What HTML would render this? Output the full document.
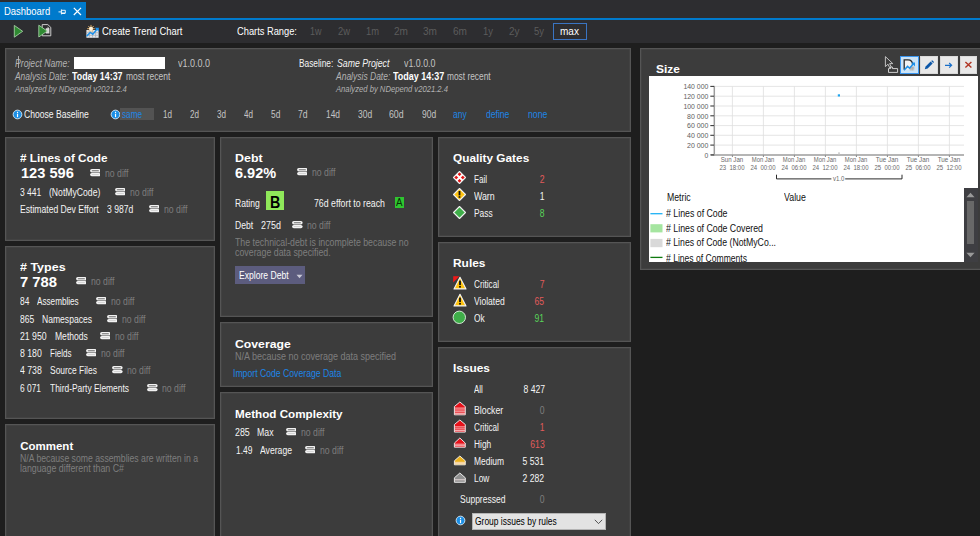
<!DOCTYPE html>
<html><head><meta charset="utf-8"><title>Dashboard</title>
<style>
*{box-sizing:border-box;margin:0;padding:0}
html,body{width:980px;height:536px;overflow:hidden;background:#1e1e1e;font-family:"Liberation Sans",sans-serif;font-size:10px;color:#f1f1f1}
body{position:relative}
.a{position:absolute;white-space:nowrap;display:block}
.p{position:absolute;background:#3c3c3c;border:1px solid #555;box-shadow:inset 0 0 0 0.5px rgba(85,85,85,.5)}
</style></head><body>
<div class="a" style="left:0px;top:0px;width:980px;height:20px;background:#2d2d30;"></div>
<div class="a" style="left:0px;top:2.4px;width:85.5px;height:16.6px;background:#007acc;"></div>
<div class="a" style="left:0px;top:18px;width:980px;height:2px;background:#007acc;"></div>
<div class="a" style="top:1px;line-height:20px;font-size:10.6px;color:#fff;left:3.80px;transform-origin:0 0;transform:scaleX(0.8909);">Dashboard</div>
<svg class="a" style="left:58px;top:7px" width="9" height="9" viewBox="0 0 9 9"><path d="M0.5 4.9H3.4M3.4 2.4V7.4M3.4 3.3H7.3V6H3.4M3.4 6.5H7.3" fill="none" stroke="#fff" stroke-width="0.9"/></svg>
<svg class="a" style="left:73px;top:7.3px" width="9" height="9" viewBox="0 0 9 9"><path d="M0.8 0.8L8 8M8 0.8L0.8 8" fill="none" stroke="#fff" stroke-width="1.2"/></svg>
<div class="a" style="left:0px;top:20px;width:980px;height:23px;background:#2d2d30;"></div>
<svg class="a" style="left:13px;top:24px" width="12" height="15" viewBox="0 0 12 15"><path d="M1.3 1.4L9.7 7.3L1.3 13.2Z" fill="#2f8a32" stroke="#a4cda4" stroke-width="0.9"/></svg>
<svg class="a" style="left:37px;top:23px" width="16" height="16" viewBox="37 23 16 16"><path d="M42.2 24.6H47.8L50.8 27.4V35.8H42.2Z" fill="#2d2d30" stroke="#dcdcdc" stroke-width="0.9"/><path d="M45.8 28.2H47.6V26.6L49.4 28.6V33.4H45.8Z" fill="#d8d8d8"/><path d="M38.8 25.2L47.2 31.1L38.8 37Z" fill="#2f8a32" stroke="#a4cda4" stroke-width="0.9"/></svg>
<svg class="a" style="left:85px;top:23.5px" width="15" height="15" viewBox="85 23.5 15 15"><rect x="86.4" y="29.5" width="12.2" height="7.8" fill="#e3e6ea"/><path d="M86.4 32.2H98.6M86.4 34.8H98.6M89.4 29.5V37.3M92.5 29.5V37.3M95.6 29.5V37.3" stroke="#a2a9b2" stroke-width="0.7"/><path d="M91 24.4V32M87.2 28.2H94.8M88.3 25.5L93.7 30.9M93.7 25.5L88.3 30.9" stroke="#f2b968" stroke-width="0.9"/><circle cx="91" cy="28.2" r="2" fill="#fff3dc"/><path d="M86.6 35.6L90.4 32L92.8 33.8L97.2 28.6" fill="none" stroke="#1e90e8" stroke-width="1.5"/><path d="M94.8 27.2H98.8V31.2Z" fill="#1e90e8"/></svg>
<div class="a" style="top:22px;line-height:20px;font-size:10.4px;color:#fff;left:102.00px;transform-origin:0 0;transform:scaleX(0.9043);">Create Trend Chart</div>
<div class="a" style="top:22px;line-height:20px;font-size:10.4px;color:#fff;left:237.00px;transform-origin:0 0;transform:scaleX(0.8947);">Charts Range:</div>
<div class="a" style="top:22px;line-height:20px;font-size:10.4px;color:#5c5c5c;left:309.50px;transform-origin:0 0;transform:scaleX(0.8650);">1w</div>
<div class="a" style="top:22px;line-height:20px;font-size:10.4px;color:#5c5c5c;left:337.50px;transform-origin:0 0;transform:scaleX(0.9026);">2w</div>
<div class="a" style="top:22px;line-height:20px;font-size:10.4px;color:#5c5c5c;left:365.50px;transform-origin:0 0;transform:scaleX(0.8998);">1m</div>
<div class="a" style="top:22px;line-height:20px;font-size:10.4px;color:#5c5c5c;left:394.00px;transform-origin:0 0;transform:scaleX(0.9690);">2m</div>
<div class="a" style="top:22px;line-height:20px;font-size:10.4px;color:#5c5c5c;left:423.00px;transform-origin:0 0;transform:scaleX(0.9690);">3m</div>
<div class="a" style="top:22px;line-height:20px;font-size:10.4px;color:#5c5c5c;left:453.00px;transform-origin:0 0;transform:scaleX(0.9690);">6m</div>
<div class="a" style="top:22px;line-height:20px;font-size:10.4px;color:#5c5c5c;left:483.00px;transform-origin:0 0;transform:scaleX(0.9104);">1y</div>
<div class="a" style="top:22px;line-height:20px;font-size:10.4px;color:#5c5c5c;left:508.50px;transform-origin:0 0;transform:scaleX(0.9559);">2y</div>
<div class="a" style="top:22px;line-height:20px;font-size:10.4px;color:#5c5c5c;left:534.00px;transform-origin:0 0;transform:scaleX(0.9104);">5y</div>
<div class="a" style="left:553px;top:23.2px;width:34px;height:16.4px;background:#2d2d30;border:1.2px solid #3a74c2"></div>
<div class="a" style="top:22px;line-height:20px;font-size:10.4px;color:#fff;left:560.00px;transform-origin:0 0;transform:scaleX(0.9670);">max</div>
<div class="p" style="left:5px;top:48px;width:626px;height:84px"></div>
<div class="p" style="left:5px;top:137px;width:210px;height:104px"></div>
<div class="p" style="left:5px;top:246px;width:210px;height:173px"></div>
<div class="p" style="left:5px;top:424px;width:210px;height:121px"></div>
<div class="p" style="left:220px;top:137px;width:213px;height:180px"></div>
<div class="p" style="left:220px;top:322px;width:213px;height:65px"></div>
<div class="p" style="left:220px;top:392px;width:213px;height:153px"></div>
<div class="p" style="left:438px;top:137px;width:193px;height:100px"></div>
<div class="p" style="left:438px;top:242px;width:193px;height:100px"></div>
<div class="p" style="left:438px;top:347px;width:193px;height:198px"></div>
<div class="p" style="left:640px;top:48px;width:350px;height:222px"></div>
<div class="a" style="top:53px;line-height:20px;font-size:11px;color:#b2b2b2;font-style:italic;left:14.70px;transform-origin:0 0;transform:scaleX(0.7849);">Project Name:</div>
<div class="a" style="left:73.5px;top:57px;width:91px;height:12px;background:#fff;"></div>
<div class="a" style="left:18px;top:55.5px;width:1px;height:12.5px;background:#bdbdbd;opacity:.8"></div>
<div class="a" style="top:53px;line-height:20px;font-size:11px;color:#c4c4c4;left:177.50px;transform-origin:0 0;transform:scaleX(0.8176);">v1.0.0.0</div>
<div class="a" style="top:66px;line-height:20px;font-size:11px;color:#b2b2b2;font-style:italic;left:14.70px;transform-origin:0 0;transform:scaleX(0.7666);">Analysis Date:</div>
<div class="a" style="top:66px;line-height:20px;font-size:11px;color:#fff;font-weight:bold;left:72.30px;transform-origin:0 0;transform:scaleX(0.8045);">Today 14:37</div>
<div class="a" style="top:66px;line-height:20px;font-size:11px;color:#c4c4c4;left:125.70px;transform-origin:0 0;transform:scaleX(0.7709);">most recent</div>
<div class="a" style="top:79px;line-height:20px;font-size:9.5px;color:#b2b2b2;font-style:italic;left:14.70px;transform-origin:0 0;transform:scaleX(0.8049);">Analyzed by NDepend v2021.2.4</div>
<div class="a" style="top:53px;line-height:20px;font-size:11px;color:#f4f4f4;left:298.60px;transform-origin:0 0;transform:scaleX(0.7580);">Baseline:</div>
<div class="a" style="top:53px;line-height:20px;font-size:11px;color:#f4f4f4;font-style:italic;left:336.90px;transform-origin:0 0;transform:scaleX(0.7936);">Same Project</div>
<div class="a" style="top:53px;line-height:20px;font-size:11px;color:#c4c4c4;left:404.20px;transform-origin:0 0;transform:scaleX(0.8023);">v1.0.0.0</div>
<div class="a" style="top:66px;line-height:20px;font-size:11px;color:#b2b2b2;font-style:italic;left:335.70px;transform-origin:0 0;transform:scaleX(0.7723);">Analysis Date:</div>
<div class="a" style="top:66px;line-height:20px;font-size:11px;color:#fff;font-weight:bold;left:393.30px;transform-origin:0 0;transform:scaleX(0.8157);">Today 14:37</div>
<div class="a" style="top:66px;line-height:20px;font-size:11px;color:#c4c4c4;left:447.30px;transform-origin:0 0;transform:scaleX(0.7587);">most recent</div>
<div class="a" style="top:79px;line-height:20px;font-size:9.5px;color:#b2b2b2;font-style:italic;left:335.70px;transform-origin:0 0;transform:scaleX(0.8063);">Analyzed by NDepend v2021.2.4</div>
<svg class="a" style="left:12.2px;top:108.5px" width="11" height="11" viewBox="0 0 11 11"><circle cx="5.5" cy="5.5" r="4.35" fill="#1b8fe6" stroke="#d8ecfb" stroke-width="0.9"/><rect x="4.95" y="4.7" width="1.15" height="3.4" fill="#fff"/><rect x="4.95" y="2.8" width="1.15" height="1.2" fill="#fff"/></svg>
<div class="a" style="top:105px;line-height:20px;font-size:10px;color:#f4f4f4;left:24.20px;transform-origin:0 0;transform:scaleX(0.8571);">Choose Baseline</div>
<svg class="a" style="left:110.2px;top:108.5px" width="11" height="11" viewBox="0 0 11 11"><circle cx="5.5" cy="5.5" r="4.35" fill="#1b8fe6" stroke="#d8ecfb" stroke-width="0.9"/><rect x="4.95" y="4.7" width="1.15" height="3.4" fill="#fff"/><rect x="4.95" y="2.8" width="1.15" height="1.2" fill="#fff"/></svg>
<div class="a" style="left:120.3px;top:108.4px;width:33.5px;height:11.4px;background:#535353;"></div>
<div class="a" style="top:105px;line-height:20px;font-size:10px;color:#1d86e6;left:122.00px;transform-origin:0 0;transform:scaleX(0.8179);">same</div>
<div class="a" style="top:105px;line-height:20px;font-size:10px;color:#c4c4c4;left:163.20px;transform-origin:0 0;transform:scaleX(0.8091);">1d</div>
<div class="a" style="top:105px;line-height:20px;font-size:10px;color:#c4c4c4;left:190.00px;transform-origin:0 0;transform:scaleX(0.8091);">2d</div>
<div class="a" style="top:105px;line-height:20px;font-size:10px;color:#c4c4c4;left:217.00px;transform-origin:0 0;transform:scaleX(0.8091);">3d</div>
<div class="a" style="top:105px;line-height:20px;font-size:10px;color:#c4c4c4;left:244.00px;transform-origin:0 0;transform:scaleX(0.8091);">4d</div>
<div class="a" style="top:105px;line-height:20px;font-size:10px;color:#c4c4c4;left:271.00px;transform-origin:0 0;transform:scaleX(0.8361);">5d</div>
<div class="a" style="top:105px;line-height:20px;font-size:10px;color:#c4c4c4;left:298.40px;transform-origin:0 0;transform:scaleX(0.8630);">7d</div>
<div class="a" style="top:105px;line-height:20px;font-size:10px;color:#c4c4c4;left:325.60px;transform-origin:0 0;transform:scaleX(0.8391);">14d</div>
<div class="a" style="top:105px;line-height:20px;font-size:10px;color:#c4c4c4;left:357.90px;transform-origin:0 0;transform:scaleX(0.8451);">30d</div>
<div class="a" style="top:105px;line-height:20px;font-size:10px;color:#c4c4c4;left:389.30px;transform-origin:0 0;transform:scaleX(0.8750);">60d</div>
<div class="a" style="top:105px;line-height:20px;font-size:10px;color:#c4c4c4;left:421.50px;transform-origin:0 0;transform:scaleX(0.8451);">90d</div>
<div class="a" style="top:105px;line-height:20px;font-size:10px;color:#1d86e6;left:453.40px;transform-origin:0 0;transform:scaleX(0.8435);">any</div>
<div class="a" style="top:105px;line-height:20px;font-size:10px;color:#1d86e6;left:485.60px;transform-origin:0 0;transform:scaleX(0.8588);">define</div>
<div class="a" style="top:105px;line-height:20px;font-size:10px;color:#1d86e6;left:528.40px;transform-origin:0 0;transform:scaleX(0.8675);">none</div>
<div class="a" style="top:148px;line-height:20px;font-size:11.5px;color:#fff;font-weight:bold;left:20.00px;transform-origin:0 0;transform:scaleX(1.0219);"># Lines of Code</div>
<div class="a" style="top:163px;line-height:20px;font-size:14.3px;color:#fff;font-weight:bold;left:20.70px;transform-origin:0 0;transform:scaleX(1.0214);">123 596</div>
<svg class="a" style="left:89.8px;top:169.4px" width="10.7" height="7.3" viewBox="0 0 11 7.4" preserveAspectRatio="none"><rect x="0.1" y="0.1" width="10.8" height="3.35" rx="1.67" fill="#f2f2f2"/><rect x="1.8" y="1.15" width="7.4" height="1.2" rx="0.6" fill="#6e6e6e"/><rect x="0.1" y="3.95" width="10.8" height="3.35" rx="1.67" fill="#f2f2f2"/><rect x="1.8" y="5.05" width="7.4" height="1.1" rx="0.55" fill="#d6d6d6"/></svg>
<div class="a" style="top:164px;line-height:20px;font-size:10px;color:#7c7c7c;left:104.80px;transform-origin:0 0;transform:scaleX(0.8684);">no diff</div>
<div class="a" style="top:183px;line-height:20px;font-size:10px;color:#f4f4f4;left:20.00px;transform-origin:0 0;transform:scaleX(0.8511);">3 441</div>
<div class="a" style="top:183px;line-height:20px;font-size:10px;color:#f4f4f4;left:49.00px;transform-origin:0 0;transform:scaleX(0.8628);">(NotMyCode)</div>
<svg class="a" style="left:114.6px;top:188.4px" width="10.7" height="7.3" viewBox="0 0 11 7.4" preserveAspectRatio="none"><rect x="0.1" y="0.1" width="10.8" height="3.35" rx="1.67" fill="#f2f2f2"/><rect x="1.8" y="1.15" width="7.4" height="1.2" rx="0.6" fill="#6e6e6e"/><rect x="0.1" y="3.95" width="10.8" height="3.35" rx="1.67" fill="#f2f2f2"/><rect x="1.8" y="5.05" width="7.4" height="1.1" rx="0.55" fill="#d6d6d6"/></svg>
<div class="a" style="top:183px;line-height:20px;font-size:10px;color:#7c7c7c;left:129.60px;transform-origin:0 0;transform:scaleX(0.8684);">no diff</div>
<div class="a" style="top:200px;line-height:20px;font-size:10px;color:#f4f4f4;left:20.00px;transform-origin:0 0;transform:scaleX(0.8599);">Estimated Dev Effort</div>
<div class="a" style="top:200px;line-height:20px;font-size:10px;color:#f4f4f4;left:106.80px;transform-origin:0 0;transform:scaleX(0.8566);">3 987d</div>
<svg class="a" style="left:148.6px;top:205.4px" width="10.7" height="7.3" viewBox="0 0 11 7.4" preserveAspectRatio="none"><rect x="0.1" y="0.1" width="10.8" height="3.35" rx="1.67" fill="#f2f2f2"/><rect x="1.8" y="1.15" width="7.4" height="1.2" rx="0.6" fill="#6e6e6e"/><rect x="0.1" y="3.95" width="10.8" height="3.35" rx="1.67" fill="#f2f2f2"/><rect x="1.8" y="5.05" width="7.4" height="1.1" rx="0.55" fill="#d6d6d6"/></svg>
<div class="a" style="top:200px;line-height:20px;font-size:10px;color:#7c7c7c;left:163.60px;transform-origin:0 0;transform:scaleX(0.8684);">no diff</div>
<div class="a" style="top:257px;line-height:20px;font-size:11.5px;color:#fff;font-weight:bold;left:20.00px;transform-origin:0 0;transform:scaleX(1.0864);"># Types</div>
<div class="a" style="top:272px;line-height:20px;font-size:14.3px;color:#fff;font-weight:bold;left:20.00px;transform-origin:0 0;transform:scaleX(1.0339);">7 788</div>
<svg class="a" style="left:75.7px;top:277.4px" width="10.7" height="7.3" viewBox="0 0 11 7.4" preserveAspectRatio="none"><rect x="0.1" y="0.1" width="10.8" height="3.35" rx="1.67" fill="#f2f2f2"/><rect x="1.8" y="1.15" width="7.4" height="1.2" rx="0.6" fill="#6e6e6e"/><rect x="0.1" y="3.95" width="10.8" height="3.35" rx="1.67" fill="#f2f2f2"/><rect x="1.8" y="5.05" width="7.4" height="1.1" rx="0.55" fill="#d6d6d6"/></svg>
<div class="a" style="top:272px;line-height:20px;font-size:10px;color:#7c7c7c;left:90.70px;transform-origin:0 0;transform:scaleX(0.8684);">no diff</div>
<div class="a" style="top:292px;line-height:20px;font-size:10px;color:#f4f4f4;left:20.00px;transform-origin:0 0;transform:scaleX(0.8361);">84</div>
<div class="a" style="top:292px;line-height:20px;font-size:10px;color:#f4f4f4;left:37.30px;transform-origin:0 0;transform:scaleX(0.8156);">Assemblies</div>
<svg class="a" style="left:95.7px;top:297.4px" width="10.7" height="7.3" viewBox="0 0 11 7.4" preserveAspectRatio="none"><rect x="0.1" y="0.1" width="10.8" height="3.35" rx="1.67" fill="#f2f2f2"/><rect x="1.8" y="1.15" width="7.4" height="1.2" rx="0.6" fill="#6e6e6e"/><rect x="0.1" y="3.95" width="10.8" height="3.35" rx="1.67" fill="#f2f2f2"/><rect x="1.8" y="5.05" width="7.4" height="1.1" rx="0.55" fill="#d6d6d6"/></svg>
<div class="a" style="top:292px;line-height:20px;font-size:10px;color:#7c7c7c;left:110.70px;transform-origin:0 0;transform:scaleX(0.8684);">no diff</div>
<div class="a" style="top:310px;line-height:20px;font-size:10px;color:#f4f4f4;left:20.00px;transform-origin:0 0;transform:scaleX(0.8511);">865</div>
<div class="a" style="top:310px;line-height:20px;font-size:10px;color:#f4f4f4;left:42.10px;transform-origin:0 0;transform:scaleX(0.8567);">Namespaces</div>
<svg class="a" style="left:106.8px;top:315.4px" width="10.7" height="7.3" viewBox="0 0 11 7.4" preserveAspectRatio="none"><rect x="0.1" y="0.1" width="10.8" height="3.35" rx="1.67" fill="#f2f2f2"/><rect x="1.8" y="1.15" width="7.4" height="1.2" rx="0.6" fill="#6e6e6e"/><rect x="0.1" y="3.95" width="10.8" height="3.35" rx="1.67" fill="#f2f2f2"/><rect x="1.8" y="5.05" width="7.4" height="1.1" rx="0.55" fill="#d6d6d6"/></svg>
<div class="a" style="top:310px;line-height:20px;font-size:10px;color:#7c7c7c;left:121.80px;transform-origin:0 0;transform:scaleX(0.8684);">no diff</div>
<div class="a" style="top:327px;line-height:20px;font-size:10px;color:#f4f4f4;left:20.00px;transform-origin:0 0;transform:scaleX(0.8697);">21 950</div>
<div class="a" style="top:327px;line-height:20px;font-size:10px;color:#f4f4f4;left:54.50px;transform-origin:0 0;transform:scaleX(0.8552);">Methods</div>
<svg class="a" style="left:99.8px;top:332.4px" width="10.7" height="7.3" viewBox="0 0 11 7.4" preserveAspectRatio="none"><rect x="0.1" y="0.1" width="10.8" height="3.35" rx="1.67" fill="#f2f2f2"/><rect x="1.8" y="1.15" width="7.4" height="1.2" rx="0.6" fill="#6e6e6e"/><rect x="0.1" y="3.95" width="10.8" height="3.35" rx="1.67" fill="#f2f2f2"/><rect x="1.8" y="5.05" width="7.4" height="1.1" rx="0.55" fill="#d6d6d6"/></svg>
<div class="a" style="top:327px;line-height:20px;font-size:10px;color:#7c7c7c;left:114.80px;transform-origin:0 0;transform:scaleX(0.8684);">no diff</div>
<div class="a" style="top:344px;line-height:20px;font-size:10px;color:#f4f4f4;left:20.00px;transform-origin:0 0;transform:scaleX(0.8711);">8 180</div>
<div class="a" style="top:344px;line-height:20px;font-size:10px;color:#f4f4f4;left:49.70px;transform-origin:0 0;transform:scaleX(0.8022);">Fields</div>
<svg class="a" style="left:85.7px;top:349.4px" width="10.7" height="7.3" viewBox="0 0 11 7.4" preserveAspectRatio="none"><rect x="0.1" y="0.1" width="10.8" height="3.35" rx="1.67" fill="#f2f2f2"/><rect x="1.8" y="1.15" width="7.4" height="1.2" rx="0.6" fill="#6e6e6e"/><rect x="0.1" y="3.95" width="10.8" height="3.35" rx="1.67" fill="#f2f2f2"/><rect x="1.8" y="5.05" width="7.4" height="1.1" rx="0.55" fill="#d6d6d6"/></svg>
<div class="a" style="top:344px;line-height:20px;font-size:10px;color:#7c7c7c;left:100.70px;transform-origin:0 0;transform:scaleX(0.8684);">no diff</div>
<div class="a" style="top:361px;line-height:20px;font-size:10px;color:#f4f4f4;left:20.00px;transform-origin:0 0;transform:scaleX(0.8711);">4 738</div>
<div class="a" style="top:361px;line-height:20px;font-size:10px;color:#f4f4f4;left:49.70px;transform-origin:0 0;transform:scaleX(0.8439);">Source Files</div>
<svg class="a" style="left:111.9px;top:366.4px" width="10.7" height="7.3" viewBox="0 0 11 7.4" preserveAspectRatio="none"><rect x="0.1" y="0.1" width="10.8" height="3.35" rx="1.67" fill="#f2f2f2"/><rect x="1.8" y="1.15" width="7.4" height="1.2" rx="0.6" fill="#6e6e6e"/><rect x="0.1" y="3.95" width="10.8" height="3.35" rx="1.67" fill="#f2f2f2"/><rect x="1.8" y="5.05" width="7.4" height="1.1" rx="0.55" fill="#d6d6d6"/></svg>
<div class="a" style="top:361px;line-height:20px;font-size:10px;color:#7c7c7c;left:126.90px;transform-origin:0 0;transform:scaleX(0.8684);">no diff</div>
<div class="a" style="top:379px;line-height:20px;font-size:10px;color:#f4f4f4;left:20.00px;transform-origin:0 0;transform:scaleX(0.8392);">6 071</div>
<div class="a" style="top:379px;line-height:20px;font-size:10px;color:#f4f4f4;left:49.70px;transform-origin:0 0;transform:scaleX(0.8411);">Third-Party Elements</div>
<svg class="a" style="left:147.1px;top:384.4px" width="10.7" height="7.3" viewBox="0 0 11 7.4" preserveAspectRatio="none"><rect x="0.1" y="0.1" width="10.8" height="3.35" rx="1.67" fill="#f2f2f2"/><rect x="1.8" y="1.15" width="7.4" height="1.2" rx="0.6" fill="#6e6e6e"/><rect x="0.1" y="3.95" width="10.8" height="3.35" rx="1.67" fill="#f2f2f2"/><rect x="1.8" y="5.05" width="7.4" height="1.1" rx="0.55" fill="#d6d6d6"/></svg>
<div class="a" style="top:379px;line-height:20px;font-size:10px;color:#7c7c7c;left:162.10px;transform-origin:0 0;transform:scaleX(0.8684);">no diff</div>
<div class="a" style="top:436px;line-height:20px;font-size:11.5px;color:#fff;font-weight:bold;left:20.20px;transform-origin:0 0;">Comment</div>
<div class="a" style="top:449px;line-height:20px;font-size:10px;color:#7e7e7e;left:20.00px;transform-origin:0 0;transform:scaleX(0.8679);">N/A because some assemblies are written in a</div>
<div class="a" style="top:459px;line-height:20px;font-size:10px;color:#7e7e7e;left:20.00px;transform-origin:0 0;transform:scaleX(0.8837);">language different than C#</div>
<div class="a" style="top:148px;line-height:20px;font-size:11.5px;color:#fff;font-weight:bold;left:235.20px;transform-origin:0 0;transform:scaleX(1.0800);">Debt</div>
<div class="a" style="top:163px;line-height:20px;font-size:14.3px;color:#fff;font-weight:bold;left:235.20px;transform-origin:0 0;transform:scaleX(1.0136);">6.92%</div>
<svg class="a" style="left:296.6px;top:168.4px" width="10.7" height="7.3" viewBox="0 0 11 7.4" preserveAspectRatio="none"><rect x="0.1" y="0.1" width="10.8" height="3.35" rx="1.67" fill="#f2f2f2"/><rect x="1.8" y="1.15" width="7.4" height="1.2" rx="0.6" fill="#6e6e6e"/><rect x="0.1" y="3.95" width="10.8" height="3.35" rx="1.67" fill="#f2f2f2"/><rect x="1.8" y="5.05" width="7.4" height="1.1" rx="0.55" fill="#d6d6d6"/></svg>
<div class="a" style="top:163px;line-height:20px;font-size:10px;color:#7c7c7c;left:311.60px;transform-origin:0 0;transform:scaleX(0.8684);">no diff</div>
<div class="a" style="top:194px;line-height:20px;font-size:10px;color:#f4f4f4;left:235.20px;transform-origin:0 0;transform:scaleX(0.8579);">Rating</div>
<div class="a" style="left:266.1px;top:190.8px;width:18.4px;height:19.7px;background:#8fe85a;"></div>
<div class="a" style="top:193px;line-height:20px;font-size:16.6px;color:#000;font-weight:bold;left:270.30px;transform-origin:0 0;transform:scaleX(0.8592);">B</div>
<div class="a" style="top:194px;line-height:20px;font-size:10px;color:#f4f4f4;left:314.20px;transform-origin:0 0;transform:scaleX(0.8755);">76d effort to reach</div>
<div class="a" style="left:394.7px;top:197.3px;width:9.3px;height:10.8px;background:#2fc52f;"></div>
<div class="a" style="top:193px;line-height:20px;font-size:10.4px;color:#062e06;left:396.10px;transform-origin:0 0;transform:scaleX(0.9370);">A</div>
<div class="a" style="top:216px;line-height:20px;font-size:10px;color:#f4f4f4;left:235.20px;transform-origin:0 0;transform:scaleX(0.8569);">Debt</div>
<div class="a" style="top:216px;line-height:20px;font-size:10px;color:#f4f4f4;left:261.00px;transform-origin:0 0;transform:scaleX(0.8945);">275d</div>
<svg class="a" style="left:292.4px;top:221.4px" width="10.7" height="7.3" viewBox="0 0 11 7.4" preserveAspectRatio="none"><rect x="0.1" y="0.1" width="10.8" height="3.35" rx="1.67" fill="#f2f2f2"/><rect x="1.8" y="1.15" width="7.4" height="1.2" rx="0.6" fill="#6e6e6e"/><rect x="0.1" y="3.95" width="10.8" height="3.35" rx="1.67" fill="#f2f2f2"/><rect x="1.8" y="5.05" width="7.4" height="1.1" rx="0.55" fill="#d6d6d6"/></svg>
<div class="a" style="top:216px;line-height:20px;font-size:10px;color:#7c7c7c;left:307.40px;transform-origin:0 0;transform:scaleX(0.8684);">no diff</div>
<div class="a" style="top:233px;line-height:20px;font-size:10px;color:#7e7e7e;left:235.20px;transform-origin:0 0;transform:scaleX(0.8772);">The technical-debt is incomplete because no</div>
<div class="a" style="top:243px;line-height:20px;font-size:10px;color:#7e7e7e;left:235.20px;transform-origin:0 0;transform:scaleX(0.8828);">coverage data specified.</div>
<div class="a" style="left:235.2px;top:266.4px;width:69.8px;height:17.8px;background:#5c5c7e;"></div>
<div class="a" style="top:266px;line-height:20px;font-size:10px;color:#fff;left:239.10px;transform-origin:0 0;transform:scaleX(0.8580);">Explore Debt</div>
<svg class="a" style="left:296px;top:274px" width="7" height="5" viewBox="0 0 7 5"><path d="M0.5 0.8H6.5L3.5 4.2Z" fill="#c9c9d6"/></svg>
<div class="a" style="top:334px;line-height:20px;font-size:11.5px;color:#fff;font-weight:bold;left:235.20px;transform-origin:0 0;transform:scaleX(1.0627);">Coverage</div>
<div class="a" style="top:347px;line-height:20px;font-size:10px;color:#7e7e7e;left:235.20px;transform-origin:0 0;transform:scaleX(0.8994);">N/A because no coverage data specified</div>
<div class="a" style="top:364px;line-height:20px;font-size:10px;color:#1d86e6;left:233.10px;transform-origin:0 0;transform:scaleX(0.8659);">Import Code Coverage Data</div>
<div class="a" style="top:404px;line-height:20px;font-size:11.5px;color:#fff;font-weight:bold;left:235.20px;transform-origin:0 0;transform:scaleX(1.0135);">Method Complexity</div>
<div class="a" style="top:423px;line-height:20px;font-size:10px;color:#f4f4f4;left:235.20px;transform-origin:0 0;transform:scaleX(0.8870);">285</div>
<div class="a" style="top:423px;line-height:20px;font-size:10px;color:#f4f4f4;left:257.10px;transform-origin:0 0;transform:scaleX(0.8734);">Max</div>
<svg class="a" style="left:285.6px;top:428.4px" width="10.7" height="7.3" viewBox="0 0 11 7.4" preserveAspectRatio="none"><rect x="0.1" y="0.1" width="10.8" height="3.35" rx="1.67" fill="#f2f2f2"/><rect x="1.8" y="1.15" width="7.4" height="1.2" rx="0.6" fill="#6e6e6e"/><rect x="0.1" y="3.95" width="10.8" height="3.35" rx="1.67" fill="#f2f2f2"/><rect x="1.8" y="5.05" width="7.4" height="1.1" rx="0.55" fill="#d6d6d6"/></svg>
<div class="a" style="top:423px;line-height:20px;font-size:10px;color:#7c7c7c;left:300.60px;transform-origin:0 0;transform:scaleX(0.8684);">no diff</div>
<div class="a" style="top:441px;line-height:20px;font-size:10px;color:#f4f4f4;left:235.60px;transform-origin:0 0;transform:scaleX(0.8426);">1.49</div>
<div class="a" style="top:441px;line-height:20px;font-size:10px;color:#f4f4f4;left:260.10px;transform-origin:0 0;transform:scaleX(0.8633);">Average</div>
<svg class="a" style="left:304.6px;top:446.4px" width="10.7" height="7.3" viewBox="0 0 11 7.4" preserveAspectRatio="none"><rect x="0.1" y="0.1" width="10.8" height="3.35" rx="1.67" fill="#f2f2f2"/><rect x="1.8" y="1.15" width="7.4" height="1.2" rx="0.6" fill="#6e6e6e"/><rect x="0.1" y="3.95" width="10.8" height="3.35" rx="1.67" fill="#f2f2f2"/><rect x="1.8" y="5.05" width="7.4" height="1.1" rx="0.55" fill="#d6d6d6"/></svg>
<div class="a" style="top:441px;line-height:20px;font-size:10px;color:#7c7c7c;left:319.60px;transform-origin:0 0;transform:scaleX(0.8684);">no diff</div>
<div class="a" style="top:148px;line-height:20px;font-size:11.5px;color:#fff;font-weight:bold;left:453.20px;transform-origin:0 0;transform:scaleX(1.0278);">Quality Gates</div>
<svg class="a" style="left:452.2px;top:170.1px" width="15" height="15" viewBox="0 0 15 15"><path d="M7.5 1.5L13.5 7.5L7.5 13.5L1.5 7.5Z" fill="#e31212" stroke="#f2f2f2" stroke-width="1.1" stroke-linejoin="round"/><path d="M4.5 4.5L10.5 10.5M10.5 4.5L4.5 10.5" stroke="#fff" stroke-width="1.8"/></svg>
<svg class="a" style="left:452.2px;top:187.3px" width="15" height="15" viewBox="0 0 15 15"><path d="M7.5 1.5L13.5 7.5L7.5 13.5L1.5 7.5Z" fill="#ffc30f" stroke="#f2f2f2" stroke-width="1.1" stroke-linejoin="round"/><rect x="6.6" y="4" width="1.8" height="4.4" fill="#111"/><rect x="6.6" y="9.2" width="1.8" height="1.6" fill="#111"/></svg>
<svg class="a" style="left:452.2px;top:204.7px" width="15" height="15" viewBox="0 0 15 15"><path d="M7.5 1.5L13.5 7.5L7.5 13.5L1.5 7.5Z" fill="#3fae49" stroke="#f2f2f2" stroke-width="1.1" stroke-linejoin="round"/></svg>
<div class="a" style="top:170px;line-height:20px;font-size:10px;color:#f4f4f4;left:474.30px;transform-origin:0 0;transform:scaleX(0.8067);">Fail</div>
<div class="a" style="top:170px;line-height:20px;font-size:10px;color:#e25b5b;right:435.60px;transform-origin:100% 0;transform:scaleX(0.86);">2</div>
<div class="a" style="top:187px;line-height:20px;font-size:10px;color:#f4f4f4;left:474.30px;transform-origin:0 0;transform:scaleX(0.8801);">Warn</div>
<div class="a" style="top:187px;line-height:20px;font-size:10px;color:#f4f4f4;right:435.60px;transform-origin:100% 0;transform:scaleX(0.86);">1</div>
<div class="a" style="top:204px;line-height:20px;font-size:10px;color:#f4f4f4;left:474.30px;transform-origin:0 0;transform:scaleX(0.8411);">Pass</div>
<div class="a" style="top:204px;line-height:20px;font-size:10px;color:#59d459;right:435.60px;transform-origin:100% 0;transform:scaleX(0.86);">8</div>
<div class="a" style="top:253px;line-height:20px;font-size:11.5px;color:#fff;font-weight:bold;left:453.20px;transform-origin:0 0;transform:scaleX(1.0378);">Rules</div>
<svg class="a" style="left:452.6px;top:276.0px" width="14" height="14" viewBox="0 0 14 14"><path d="M0.2 0.3H6.4L0.2 6.5Z" fill="#f01818"/><path d="M7 1.2L13 12.9H1Z" fill="#ffc30f" stroke="#f4f4f4" stroke-width="1.1" stroke-linejoin="round"/><rect x="6.1" y="4.6" width="1.8" height="4.4" fill="#111"/><rect x="6.1" y="9.9" width="1.8" height="1.7" fill="#111"/></svg>
<svg class="a" style="left:452.6px;top:293.2px" width="14" height="14" viewBox="0 0 14 14"><path d="M7 1.2L13 12.9H1Z" fill="#ffc30f" stroke="#f4f4f4" stroke-width="1.1" stroke-linejoin="round"/><rect x="6.1" y="4.6" width="1.8" height="4.4" fill="#111"/><rect x="6.1" y="9.9" width="1.8" height="1.7" fill="#111"/></svg>
<svg class="a" style="left:452.3px;top:310.2px" width="15" height="15" viewBox="0 0 15 15"><circle cx="7.3" cy="7.3" r="6.2" fill="#3fae49" stroke="#e4f2e4" stroke-width="0.9"/></svg>
<div class="a" style="top:275px;line-height:20px;font-size:10px;color:#f4f4f4;left:474.30px;transform-origin:0 0;transform:scaleX(0.8181);">Critical</div>
<div class="a" style="top:275px;line-height:20px;font-size:10px;color:#e25b5b;right:435.60px;transform-origin:100% 0;transform:scaleX(0.86);">7</div>
<div class="a" style="top:292px;line-height:20px;font-size:10px;color:#f4f4f4;left:474.30px;transform-origin:0 0;transform:scaleX(0.8538);">Violated</div>
<div class="a" style="top:292px;line-height:20px;font-size:10px;color:#e25b5b;right:435.60px;transform-origin:100% 0;transform:scaleX(0.86);">65</div>
<div class="a" style="top:309px;line-height:20px;font-size:10px;color:#f4f4f4;left:474.30px;transform-origin:0 0;transform:scaleX(0.8374);">Ok</div>
<div class="a" style="top:309px;line-height:20px;font-size:10px;color:#59d459;right:435.60px;transform-origin:100% 0;transform:scaleX(0.86);">91</div>
<div class="a" style="top:358px;line-height:20px;font-size:11.4px;color:#fff;font-weight:bold;left:453.00px;transform-origin:0 0;transform:scaleX(1.0425);">Issues</div>
<div class="a" style="top:380px;line-height:20px;font-size:10px;color:#f4f4f4;left:474.30px;transform-origin:0 0;transform:scaleX(0.7828);">All</div>
<div class="a" style="top:380px;line-height:20px;font-size:10px;color:#f4f4f4;right:435.00px;transform-origin:100% 0;transform:scaleX(0.86);">8 427</div>
<svg class="a" style="left:450px;top:399.2px" width="20" height="18.8" viewBox="450 399.2 20 18.8"><path d="M459.85 402.2L465.3 406.7V415.0H454.4V406.7Z" fill="#e8111a" stroke="#f6f6f6" stroke-width="0.9" stroke-linejoin="round"/><path d="M454.7 408.30H465.0" stroke="#fbe9e9" stroke-width="0.8"/><path d="M454.7 410.20H465.0" stroke="#fbe9e9" stroke-width="0.8"/><path d="M454.7 412.00H465.0" stroke="#fbe9e9" stroke-width="0.8"/><path d="M454.7 413.60H465.0" stroke="#fbe9e9" stroke-width="0.8"/></svg>
<svg class="a" style="left:450px;top:417.3px" width="20" height="18.1" viewBox="450 417.3 20 18.1"><path d="M459.85 420.3L465.3 424.8V432.4H454.4V424.8Z" fill="#e8111a" stroke="#f6f6f6" stroke-width="0.9" stroke-linejoin="round"/><path d="M454.7 427.20H465.0" stroke="#fbe9e9" stroke-width="0.8"/><path d="M454.7 429.20H465.0" stroke="#fbe9e9" stroke-width="0.8"/><path d="M454.7 430.90H465.0" stroke="#fbe9e9" stroke-width="0.8"/></svg>
<svg class="a" style="left:450px;top:435.4px" width="20" height="15.2" viewBox="450 435.4 20 15.2"><path d="M459.85 438.4L465.3 443.5V447.6H454.4V443.5Z" fill="#e8111a" stroke="#f6f6f6" stroke-width="0.9" stroke-linejoin="round"/><path d="M454.7 444.60H465.0" stroke="#fbe9e9" stroke-width="0.8"/><path d="M454.7 446.10H465.0" stroke="#fbe9e9" stroke-width="0.8"/></svg>
<svg class="a" style="left:450px;top:452.9px" width="20" height="14.8" viewBox="450 452.9 20 14.8"><path d="M459.85 455.9L465.3 460.7V464.7H454.4V460.7Z" fill="#ebb11c" stroke="#f6f6f6" stroke-width="0.9" stroke-linejoin="round"/><path d="M454.7 462.20H465.0" stroke="#fbe9e9" stroke-width="0.8"/><path d="M454.7 463.50H465.0" stroke="#fbe9e9" stroke-width="0.8"/></svg>
<svg class="a" style="left:450px;top:470.0px" width="20" height="15.3" viewBox="450 470.0 20 15.3"><path d="M459.85 473.0L465.3 477.8V482.3H454.4V477.8Z" fill="#909090" stroke="#f6f6f6" stroke-width="0.9" stroke-linejoin="round"/><path d="M454.7 479.80H465.0" stroke="#fbe9e9" stroke-width="0.8"/></svg>
<div class="a" style="top:401px;line-height:20px;font-size:10px;color:#f4f4f4;left:474.30px;transform-origin:0 0;transform:scaleX(0.8757);">Blocker</div>
<div class="a" style="top:401px;line-height:20px;font-size:10px;color:#7e7e7e;right:435.50px;transform-origin:100% 0;transform:scaleX(0.86);">0</div>
<div class="a" style="top:418px;line-height:20px;font-size:10px;color:#f4f4f4;left:474.30px;transform-origin:0 0;transform:scaleX(0.8148);">Critical</div>
<div class="a" style="top:418px;line-height:20px;font-size:10px;color:#e25b5b;right:435.50px;transform-origin:100% 0;transform:scaleX(0.86);">1</div>
<div class="a" style="top:435px;line-height:20px;font-size:10px;color:#f4f4f4;left:474.30px;transform-origin:0 0;transform:scaleX(0.8363);">High</div>
<div class="a" style="top:435px;line-height:20px;font-size:10px;color:#e25b5b;right:435.50px;transform-origin:100% 0;transform:scaleX(0.86);">613</div>
<div class="a" style="top:452px;line-height:20px;font-size:10px;color:#f4f4f4;left:474.30px;transform-origin:0 0;transform:scaleX(0.8435);">Medium</div>
<div class="a" style="top:452px;line-height:20px;font-size:10px;color:#f4f4f4;right:435.50px;transform-origin:100% 0;transform:scaleX(0.86);">5 531</div>
<div class="a" style="top:469px;line-height:20px;font-size:10px;color:#f4f4f4;left:474.30px;transform-origin:0 0;transform:scaleX(0.8340);">Low</div>
<div class="a" style="top:469px;line-height:20px;font-size:10px;color:#f4f4f4;right:435.50px;transform-origin:100% 0;transform:scaleX(0.86);">2 282</div>
<div class="a" style="top:490px;line-height:20px;font-size:10px;color:#f4f4f4;left:459.60px;transform-origin:0 0;transform:scaleX(0.8506);">Suppressed</div>
<div class="a" style="top:490px;line-height:20px;font-size:10px;color:#7e7e7e;right:435.50px;transform-origin:100% 0;transform:scaleX(0.86);">0</div>
<svg class="a" style="left:454.5px;top:514.9px" width="11" height="11" viewBox="0 0 11 11"><circle cx="5.5" cy="5.5" r="4.35" fill="#1b8fe6" stroke="#d8ecfb" stroke-width="0.9"/><rect x="4.95" y="4.7" width="1.15" height="3.4" fill="#fff"/><rect x="4.95" y="2.8" width="1.15" height="1.2" fill="#fff"/></svg>
<div class="a" style="left:472.1px;top:513.2px;width:133.5px;height:16.9px;background:#e3e3e3;border:1px solid #b4b4b4"></div>
<div class="a" style="top:512px;line-height:20px;font-size:10px;color:#000;left:475.20px;transform-origin:0 0;transform:scaleX(0.8458);">Group issues by rules</div>
<svg class="a" style="left:594px;top:519px" width="9" height="6" viewBox="0 0 9 6"><path d="M0.8 0.8L4.5 4.6L8.2 0.8" fill="none" stroke="#444" stroke-width="0.9"/></svg>
<div class="a" style="top:59px;line-height:20px;font-size:11px;color:#fff;font-weight:bold;left:655.70px;transform-origin:0 0;transform:scaleX(1.0858);">Size</div>
<svg class="a" style="left:883px;top:54px" width="17" height="21" viewBox="883 54 17 21"><path d="M885.4 56.6V66.6L888 64.2L889.8 68L891.3 67.3L889.6 63.6H892.8Z" fill="#3c3c3c" stroke="#cfcfcf" stroke-width="0.9" stroke-linejoin="round"/><path d="M888.5 72.4V68.6H890.6V67H892.4V68.6H897.6V72.4Z" fill="#3c3c3c" stroke="#e0e0e0" stroke-width="0.9"/></svg>
<div class="a" style="left:900px;top:56px;width:18.5px;height:18px;background:#cce4f7;border:1.3px solid #3a96f0"></div>
<svg class="a" style="left:901px;top:57px" width="17" height="16" viewBox="901 57 17 16"><path d="M904.2 69.5V59.8H908C911 59.8 912.6 62 912.6 64.5V69.5Z" fill="#f2f2f2"/><path d="M904.2 69.5V59.8H908C911 59.8 912.6 62 912.6 65" fill="none" stroke="#2a2a2a" stroke-width="1.3"/><rect x="909.5" y="66.5" width="4.8" height="4" fill="#c9c9c9"/><path d="M909.5 68H914.3M911 66.5V70.5M912.7 66.5V70.5" stroke="#9a9a9a" stroke-width="0.5"/><path d="M904 70.3L907.6 66.4L909.6 68.2L913.6 63.6" fill="none" stroke="#1e90e8" stroke-width="1.5"/><path d="M911.2 62.6H915V66.4Z" fill="#1e90e8"/></svg>
<div class="a" style="left:920px;top:56px;width:18px;height:18px;background:#e8e8e8;border:1px solid #d9d9d9"></div>
<svg class="a" style="left:923px;top:59px" width="12" height="12" viewBox="923 59 12 12"><path d="M924.8 69.2L925.6 66.6L930.6 61.6L932.6 63.6L927.6 68.6Z" fill="#0c57a8"/><path d="M931.2 61L932.2 60.2L934 62L933.2 63Z" fill="#0c57a8"/></svg>
<div class="a" style="left:940px;top:56px;width:17.5px;height:18px;background:#e8e8e8;border:1px solid #d9d9d9"></div>
<svg class="a" style="left:943px;top:60px" width="12" height="10" viewBox="943 60 12 10"><path d="M945 65.3H951M949.2 63L951.6 65.3L949.2 67.6" fill="none" stroke="#1a6fc8" stroke-width="1.2"/></svg>
<div class="a" style="left:959.5px;top:56px;width:17.5px;height:18px;background:#e8e8e8;border:1px solid #d9d9d9"></div>
<svg class="a" style="left:963px;top:60px" width="11" height="10" viewBox="963 60 11 10"><path d="M965.4 62L971.4 67.6M971.4 62L965.4 67.6" fill="none" stroke="#b03322" stroke-width="1.4"/></svg>
<div class="a" style="left:649px;top:75.5px;width:328.5px;height:186px;background:#fff;"></div>
<svg class="a" style="left:649px;top:75.5px" width="328.5" height="186" viewBox="649 75.5 328.5 186" font-family="Liberation Sans, sans-serif"><path d="M714 85.9H964" stroke="#dedede" stroke-width="0.8"/><path d="M714 95.7H964" stroke="#dedede" stroke-width="0.8"/><path d="M714 105.5H964" stroke="#dedede" stroke-width="0.8"/><path d="M714 115.3H964" stroke="#dedede" stroke-width="0.8"/><path d="M714 125.1H964" stroke="#dedede" stroke-width="0.8"/><path d="M714 134.8H964" stroke="#dedede" stroke-width="0.8"/><path d="M714 144.6H964" stroke="#dedede" stroke-width="0.8"/><path d="M732.4 85.9V154" stroke="#dedede" stroke-width="0.8"/><path d="M732.4 154.4V156.3" stroke="#555" stroke-width="0.9"/><path d="M763.4 85.9V154" stroke="#dedede" stroke-width="0.8"/><path d="M763.4 154.4V156.3" stroke="#555" stroke-width="0.9"/><path d="M794.4 85.9V154" stroke="#dedede" stroke-width="0.8"/><path d="M794.4 154.4V156.3" stroke="#555" stroke-width="0.9"/><path d="M825.4 85.9V154" stroke="#dedede" stroke-width="0.8"/><path d="M825.4 154.4V156.3" stroke="#555" stroke-width="0.9"/><path d="M856.4 85.9V154" stroke="#dedede" stroke-width="0.8"/><path d="M856.4 154.4V156.3" stroke="#555" stroke-width="0.9"/><path d="M887.4 85.9V154" stroke="#dedede" stroke-width="0.8"/><path d="M887.4 154.4V156.3" stroke="#555" stroke-width="0.9"/><path d="M918.4 85.9V154" stroke="#dedede" stroke-width="0.8"/><path d="M918.4 154.4V156.3" stroke="#555" stroke-width="0.9"/><path d="M949.4 85.9V154" stroke="#dedede" stroke-width="0.8"/><path d="M949.4 154.4V156.3" stroke="#555" stroke-width="0.9"/><path d="M714.3 85.4V155.2" stroke="#9c9c9c" stroke-width="1.5"/><path d="M711 154.5H964" stroke="#9c9c9c" stroke-width="1.5"/><path d="M710.3 85.9H714" stroke="#3c3c3c" stroke-width="1.1"/><text x="708.4" y="88.6" font-size="7.7" fill="#5e5e5e" text-anchor="end" textLength="25.0" lengthAdjust="spacingAndGlyphs">140 000</text><path d="M710.3 95.7H714" stroke="#3c3c3c" stroke-width="1.1"/><text x="708.4" y="98.4" font-size="7.7" fill="#5e5e5e" text-anchor="end" textLength="25.0" lengthAdjust="spacingAndGlyphs">120 000</text><path d="M710.3 105.5H714" stroke="#3c3c3c" stroke-width="1.1"/><text x="708.4" y="108.2" font-size="7.7" fill="#5e5e5e" text-anchor="end" textLength="25.0" lengthAdjust="spacingAndGlyphs">100 000</text><path d="M710.3 115.3H714" stroke="#3c3c3c" stroke-width="1.1"/><text x="708.4" y="118.0" font-size="7.7" fill="#5e5e5e" text-anchor="end" textLength="21.4" lengthAdjust="spacingAndGlyphs">80 000</text><path d="M710.3 125.1H714" stroke="#3c3c3c" stroke-width="1.1"/><text x="708.4" y="127.8" font-size="7.7" fill="#5e5e5e" text-anchor="end" textLength="21.4" lengthAdjust="spacingAndGlyphs">60 000</text><path d="M710.3 134.8H714" stroke="#3c3c3c" stroke-width="1.1"/><text x="708.4" y="137.5" font-size="7.7" fill="#5e5e5e" text-anchor="end" textLength="21.4" lengthAdjust="spacingAndGlyphs">40 000</text><path d="M710.3 144.6H714" stroke="#3c3c3c" stroke-width="1.1"/><text x="708.4" y="147.3" font-size="7.7" fill="#5e5e5e" text-anchor="end" textLength="21.4" lengthAdjust="spacingAndGlyphs">20 000</text><path d="M710.3 154.4H714" stroke="#3c3c3c" stroke-width="1.1"/><text x="708.4" y="157.1" font-size="7.7" fill="#5e5e5e" text-anchor="end" textLength="3.8" lengthAdjust="spacingAndGlyphs">0</text><text x="732.0" y="161.6" font-size="6.4" fill="#6a6a6a" text-anchor="middle" textLength="22.5" lengthAdjust="spacingAndGlyphs">Sun Jan</text><text x="732.0" y="169.2" font-size="6.4" fill="#6a6a6a" text-anchor="middle" textLength="25" lengthAdjust="spacingAndGlyphs" xml:space="preserve">23  18:00</text><text x="763.0" y="161.6" font-size="6.4" fill="#6a6a6a" text-anchor="middle" textLength="22.5" lengthAdjust="spacingAndGlyphs">Mon Jan</text><text x="763.0" y="169.2" font-size="6.4" fill="#6a6a6a" text-anchor="middle" textLength="25" lengthAdjust="spacingAndGlyphs" xml:space="preserve">24  00:00</text><text x="794.0" y="161.6" font-size="6.4" fill="#6a6a6a" text-anchor="middle" textLength="22.5" lengthAdjust="spacingAndGlyphs">Mon Jan</text><text x="794.0" y="169.2" font-size="6.4" fill="#6a6a6a" text-anchor="middle" textLength="25" lengthAdjust="spacingAndGlyphs" xml:space="preserve">24  06:00</text><text x="825.0" y="161.6" font-size="6.4" fill="#6a6a6a" text-anchor="middle" textLength="22.5" lengthAdjust="spacingAndGlyphs">Mon Jan</text><text x="825.0" y="169.2" font-size="6.4" fill="#6a6a6a" text-anchor="middle" textLength="25" lengthAdjust="spacingAndGlyphs" xml:space="preserve">24  12:00</text><text x="856.0" y="161.6" font-size="6.4" fill="#6a6a6a" text-anchor="middle" textLength="22.5" lengthAdjust="spacingAndGlyphs">Mon Jan</text><text x="856.0" y="169.2" font-size="6.4" fill="#6a6a6a" text-anchor="middle" textLength="25" lengthAdjust="spacingAndGlyphs" xml:space="preserve">24  18:00</text><text x="887.0" y="161.6" font-size="6.4" fill="#6a6a6a" text-anchor="middle" textLength="22.5" lengthAdjust="spacingAndGlyphs">Tue Jan</text><text x="887.0" y="169.2" font-size="6.4" fill="#6a6a6a" text-anchor="middle" textLength="25" lengthAdjust="spacingAndGlyphs" xml:space="preserve">25  00:00</text><text x="918.0" y="161.6" font-size="6.4" fill="#6a6a6a" text-anchor="middle" textLength="22.5" lengthAdjust="spacingAndGlyphs">Tue Jan</text><text x="918.0" y="169.2" font-size="6.4" fill="#6a6a6a" text-anchor="middle" textLength="25" lengthAdjust="spacingAndGlyphs" xml:space="preserve">25  06:00</text><text x="949.0" y="161.6" font-size="6.4" fill="#6a6a6a" text-anchor="middle" textLength="22.5" lengthAdjust="spacingAndGlyphs">Tue Jan</text><text x="949.0" y="169.2" font-size="6.4" fill="#6a6a6a" text-anchor="middle" textLength="25" lengthAdjust="spacingAndGlyphs" xml:space="preserve">25  12:00</text><path d="M776.5 174.2V178.4H831.4M845.2 178.4H902V174.2" fill="none" stroke="#2a2a2a" stroke-width="1" stroke-linejoin="miter"/><text x="838.6" y="180.5" font-size="6.6" fill="#6a6a6a" text-anchor="middle" textLength="11.4" lengthAdjust="spacingAndGlyphs">v1.0</text><rect x="837.8" y="93.8" width="2.2" height="2.2" fill="#1ea5f0"/><rect x="838" y="151.8" width="2" height="2" fill="#d4d4d4"/><path d="M650.4 213.2H662.5" stroke="#1eb1f5" stroke-width="1.3"/><rect x="650.4" y="223.7" width="12.1" height="8.2" fill="#a5e5a0"/><rect x="650.4" y="238.4" width="12.1" height="8.3" fill="#d9d9d9"/><path d="M650.4 256.9H662.5" stroke="#0f7a0f" stroke-width="1.3"/></svg>
<div class="a" style="top:188px;line-height:20px;font-size:10px;color:#111;left:667.30px;transform-origin:0 0;transform:scaleX(0.8706);">Metric</div>
<div class="a" style="top:188px;line-height:20px;font-size:10px;color:#111;left:784.40px;transform-origin:0 0;transform:scaleX(0.8818);">Value</div>
<div class="a" style="top:204px;line-height:20px;font-size:10px;color:#111;left:666.00px;transform-origin:0 0;transform:scaleX(0.8779);"># Lines of Code</div>
<div class="a" style="top:219px;line-height:20px;font-size:10px;color:#111;left:666.00px;transform-origin:0 0;transform:scaleX(0.8768);"># Lines of Code Covered</div>
<div class="a" style="top:233px;line-height:20px;font-size:10px;color:#111;left:666.00px;transform-origin:0 0;transform:scaleX(0.8718);"># Lines of Code (NotMyCo...</div>
<div class="a" style="left:649px;top:250px;width:315px;height:11.5px;overflow:hidden">
<div class="a" style="top:-1px;line-height:20px;font-size:10px;color:#111;left:17.00px;transform-origin:0 0;transform:scaleX(0.8572);"># Lines of Comments</div>
</div>
<div class="a" style="left:963.5px;top:187.5px;width:14.2px;height:74px;background:#3e3e42;"></div>
<svg class="a" style="left:966px;top:191.5px" width="9" height="6" viewBox="0 0 9 6"><path d="M0.4 5.2L4.5 0.8L8.6 5.2Z" fill="#999"/></svg>
<div class="a" style="left:966.6px;top:201px;width:7.7px;height:43px;background:#686868;"></div>
<svg class="a" style="left:966px;top:251.5px" width="9" height="6" viewBox="0 0 9 6"><path d="M0.4 0.8L4.5 5.2L8.6 0.8Z" fill="#999"/></svg>
</body></html>
